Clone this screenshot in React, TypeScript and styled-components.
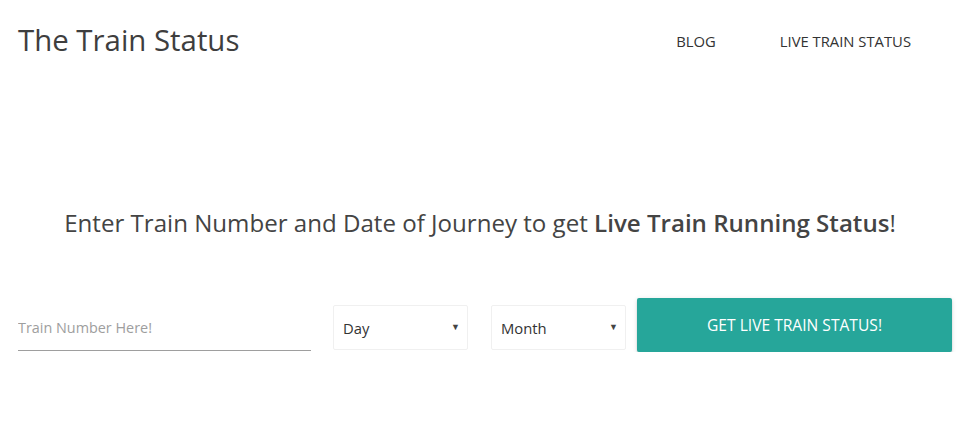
import React from "react";
import styled, { createGlobalStyle } from "styled-components";

const GlobalStyle = createGlobalStyle`
	html, body {
		margin: 0;
		padding: 0;
		background: #ffffff;
	}
	body {
		font-family: "Open Sans", "Noto Sans", sans-serif;
		color: #444444;
	}
	* {
		box-sizing: border-box;
	}
`;

const Header = styled.nav`
	display: flex;
	align-items: center;
	justify-content: space-between;
	height: 82px;
	padding: 0 27px 0 18px;
`;

const Brand = styled.a`
	font-size: 29.4px;
	color: #3e3e3e;
	text-decoration: none;
	line-height: 1;
	margin-top: -1px;
`;

const NavList = styled.ul`
	display: flex;
	margin: 0;
	padding: 0;
	list-style: none;
`;

const NavLink = styled.a`
	display: block;
	padding: 0 32px;
	font-size: 14.8px;
	color: #333333;
	text-decoration: none;
	text-transform: uppercase;
`;

const Hero = styled.section`
	display: flex;
	flex-direction: column;
	padding: 125px 18px 0;
`;

const Heading = styled.h1`
	margin: 0;
	padding-right: 10px;
	font-size: 24.1px;
	line-height: 32px;
	font-weight: 400;
	text-align: center;
	color: #444444;

	strong {
		font-weight: 600;
	}
`;

const FormRow = styled.form`
	display: flex;
	align-items: flex-start;
	margin-top: 59px;
`;

const TrainInput = styled.input`
	width: 293px;
	height: 46px;
	margin-top: 7px;
	padding: 0;
	border: none;
	border-bottom: 1px solid #9e9e9e;
	outline: none;
	font-family: inherit;
	font-size: 14.4px;
	color: #333333;
	background: transparent;

	&::placeholder {
		color: #9e9e9e;
	}
`;

const SelectBox = styled.div<{ $gap: number }>`
	position: relative;
	width: 135px;
	height: 45px;
	margin-top: 7px;
	margin-left: ${(p) => p.$gap}px;
`;

const Select = styled.select`
	appearance: none;
	width: 100%;
	height: 100%;
	padding: 0 9px;
	border: 1px solid #f0f0f0;
	border-radius: 2px;
	background: #ffffff;
	font-family: inherit;
	font-size: 14.8px;
	color: #333333;
	outline: none;
`;

const Caret = styled.span`
	position: absolute;
	right: 8px;
	top: 15px;
	font-size: 9px;
	color: #444444;
	pointer-events: none;
`;

const SubmitButton = styled.button`
	width: 315px;
	height: 54px;
	margin-left: 11px;
	border: none;
	border-radius: 2px;
	background: #26a69a;
	color: #ffffff;
	font-family: inherit;
	font-size: 15.6px;
	text-transform: uppercase;
	box-shadow: 0 2px 2px 0 rgba(0, 0, 0, 0.14), 0 1px 5px 0 rgba(0, 0, 0, 0.12),
		0 3px 1px -2px rgba(0, 0, 0, 0.2);
	cursor: pointer;
`;

const days = Array.from({ length: 31 }, (_, i) => i + 1);
const months = [
	"January",
	"February",
	"March",
	"April",
	"May",
	"June",
	"July",
	"August",
	"September",
	"October",
	"November",
	"December",
];

const App = (): JSX.Element => {
	return (
		<>
			<GlobalStyle />
			<Header>
				<Brand href="#">The Train Status</Brand>
				<NavList>
					<li>
						<NavLink href="#">Blog</NavLink>
					</li>
					<li>
						<NavLink href="#">Live Train Status</NavLink>
					</li>
				</NavList>
			</Header>
			<Hero>
				<Heading>
					Enter Train Number and Date of Journey to get{" "}
					<strong>Live Train Running Status</strong>!
				</Heading>
				<FormRow onSubmit={(e) => e.preventDefault()}>
					<TrainInput type="text" placeholder="Train Number Here!" />
					<SelectBox $gap={22}>
						<Select defaultValue="">
							<option value="">Day</option>
							{days.map((d) => (
								<option key={d} value={d}>
									{d}
								</option>
							))}
						</Select>
						<Caret>▼</Caret>
					</SelectBox>
					<SelectBox $gap={23}>
						<Select defaultValue="">
							<option value="">Month</option>
							{months.map((m, i) => (
								<option key={m} value={i + 1}>
									{m}
								</option>
							))}
						</Select>
						<Caret>▼</Caret>
					</SelectBox>
					<SubmitButton type="submit">Get Live Train Status!</SubmitButton>
				</FormRow>
			</Hero>
		</>
	);
};

export default App;
